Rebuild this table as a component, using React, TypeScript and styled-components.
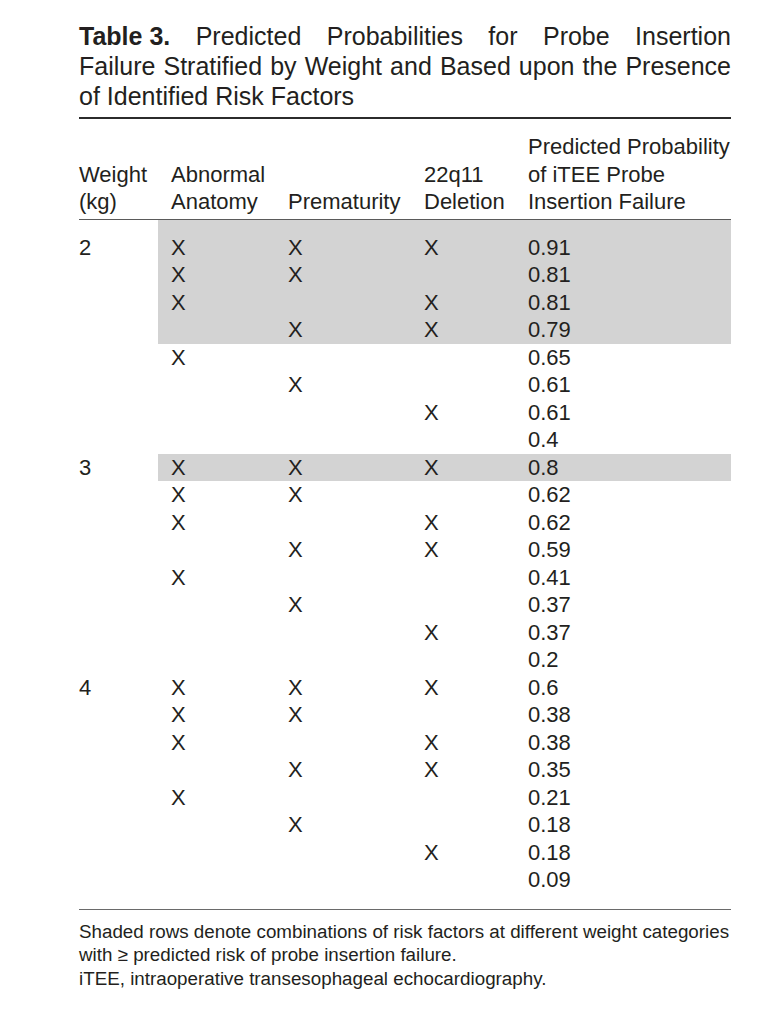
import React from "react";
import styled, { createGlobalStyle } from "styled-components";

const Global = createGlobalStyle`
  html, body { margin: 0; padding: 0; background: #ffffff; }
  body { font-family: "Liberation Sans", Arial, Helvetica, sans-serif; color: #231f20; }
`;

const Page = styled.div`
  width: 768px;
  box-sizing: border-box;
  padding: 21px 37px 0 79px;
`;

const Title = styled.h1`
  margin: 0;
  font-size: 25px;
  font-weight: 400;
  line-height: 30px;
`;

const TitleLine = styled.span<{ $justify?: boolean }>`
  display: block;
  white-space: ${(p) => (p.$justify ? "normal" : "nowrap")};
  text-align: ${(p) => (p.$justify ? "justify" : "left")};
  text-align-last: ${(p) => (p.$justify ? "justify" : "left")};
`;

const Label = styled.b`
  display: inline-block;
  font-weight: 700;
`;

const Table = styled.table`
  width: 652px;
  margin-top: 6px;
  border-collapse: collapse;
  table-layout: fixed;
  border-top: 2px solid #2b2b2b;
  border-bottom: 1.5px solid #6a6a6a;
  font-size: 22px;
  line-height: 27.5px;
`;

const Head = styled.thead`
  border-bottom: 1.5px solid #5a5a5a;
`;

const HeadCell = styled.th<{ $first?: boolean }>`
  font-weight: 400;
  text-align: left;
  vertical-align: bottom;
  white-space: nowrap;
  padding: 14px 0 3px ${(p) => (p.$first ? "0" : "13px")};
`;

const Cell = styled.td<{ $first?: boolean; $shaded?: boolean; $top?: boolean; $bottom?: boolean }>`
  padding: ${(p) => (p.$top ? "14px" : "0")} 0 ${(p) => (p.$bottom ? "15px" : "0")}
    ${(p) => (p.$first ? "0" : "13px")};
  height: 27.5px;
  vertical-align: bottom;
  white-space: nowrap;
  background: ${(p) => (p.$shaded ? "#d3d3d3" : "transparent")};
`;

const Notes = styled.div`
  margin-top: 10px;
  font-size: 18.8px;
  line-height: 23.5px;
`;

const Note = styled.p`
  margin: 0;
  white-space: nowrap;
`;

type Row = { w?: string; a: boolean; p: boolean; d: boolean; v: string; s?: boolean };

const combos: [boolean, boolean, boolean][] = [
  [true, true, true],
  [true, true, false],
  [true, false, true],
  [false, true, true],
  [true, false, false],
  [false, true, false],
  [false, false, true],
  [false, false, false],
];

const groups: { w: string; vals: string[]; shaded: number }[] = [
  { w: "2", vals: ["0.91", "0.81", "0.81", "0.79", "0.65", "0.61", "0.61", "0.4"], shaded: 4 },
  { w: "3", vals: ["0.8", "0.62", "0.62", "0.59", "0.41", "0.37", "0.37", "0.2"], shaded: 1 },
  { w: "4", vals: ["0.6", "0.38", "0.38", "0.35", "0.21", "0.18", "0.18", "0.09"], shaded: 0 },
];

const rows: Row[] = groups.flatMap((g) =>
  g.vals.map((v, i) => ({
    w: i === 0 ? g.w : undefined,
    a: combos[i][0],
    p: combos[i][1],
    d: combos[i][2],
    v,
    s: i < g.shaded,
  }))
);

export default function App() {
  return (
    <Page>
      <Global />
      <Title>
        <TitleLine $justify>
          <Label>Table 3.</Label> Predicted Probabilities for Probe Insertion
        </TitleLine>
        <TitleLine $justify>Failure Stratified by Weight and Based upon the Presence</TitleLine>
        <TitleLine>of Identified Risk Factors</TitleLine>
      </Title>
      <Table>
        <colgroup>
          <col style={{ width: 79 }} />
          <col style={{ width: 117 }} />
          <col style={{ width: 136 }} />
          <col style={{ width: 104 }} />
          <col style={{ width: 216 }} />
        </colgroup>
        <Head>
          <tr>
            <HeadCell $first>
              Weight
              <br />
              (kg)
            </HeadCell>
            <HeadCell>
              Abnormal
              <br />
              Anatomy
            </HeadCell>
            <HeadCell>Prematurity</HeadCell>
            <HeadCell>
              22q11
              <br />
              Deletion
            </HeadCell>
            <HeadCell>
              Predicted Probability
              <br />
              of iTEE Probe
              <br />
              Insertion Failure
            </HeadCell>
          </tr>
        </Head>
        <tbody>
          {rows.map((r, i) => {
            const top = i === 0;
            const bottom = i === rows.length - 1;
            return (
              <tr key={i}>
                <Cell $first $top={top} $bottom={bottom}>
                  {r.w ?? ""}
                </Cell>
                <Cell $shaded={r.s} $top={top} $bottom={bottom}>
                  {r.a ? "X" : ""}
                </Cell>
                <Cell $shaded={r.s} $top={top} $bottom={bottom}>
                  {r.p ? "X" : ""}
                </Cell>
                <Cell $shaded={r.s} $top={top} $bottom={bottom}>
                  {r.d ? "X" : ""}
                </Cell>
                <Cell $shaded={r.s} $top={top} $bottom={bottom}>
                  {r.v}
                </Cell>
              </tr>
            );
          })}
        </tbody>
      </Table>
      <Notes>
        <Note>
          Shaded rows denote combinations of risk factors at different weight categories
          <br />
          with ≥ predicted risk of probe insertion failure.
        </Note>
        <Note>iTEE, intraoperative transesophageal echocardiography.</Note>
      </Notes>
    </Page>
  );
}
